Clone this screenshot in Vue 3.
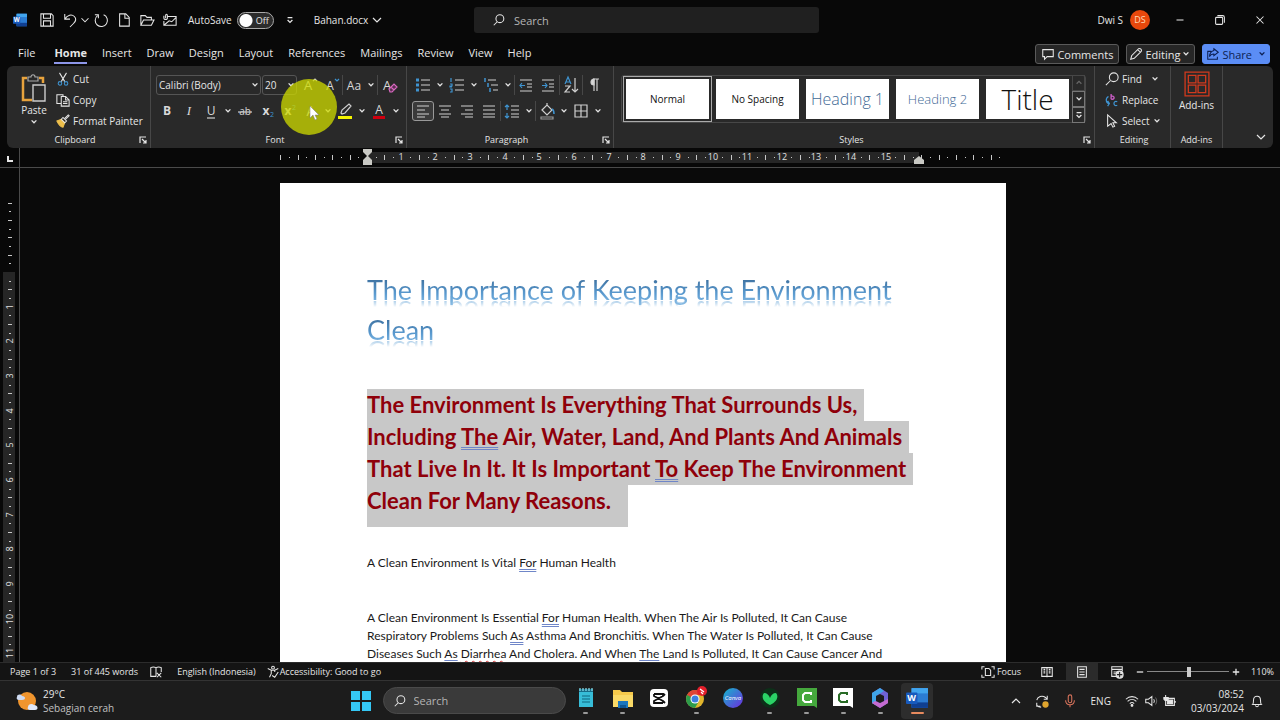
<template>
    <div class="word">
        <header class="titlebar">
            <div class="quick">
                <svg class="logo" viewBox="0 0 16 16" v-html="icons.word"></svg>
                <button v-for="q in quickButtons" :key="q.label" :class="['plain', q.size]" :aria-label="q.label">
                    <svg class="ico" viewBox="0 0 16 16" v-html="icons[q.icon]"></svg>
                </button>
                <label class="autosave">
                    AutoSave
                    <span class="toggle">
                        <input type="checkbox">
                        <span>Off</span>
                    </span>
                </label>
                <button class="plain more" aria-label="Customize">
                    <svg class="tiny" viewBox="0 0 10 10"><path d="M2 2h6M2 5l3 3 3-3" /></svg>
                </button>
                <button class="plain docname">
                    Bahan.docx
                    <svg class="chev" viewBox="0 0 10 10"><path d="M1 3l4 4 4-4" /></svg>
                </button>
            </div>
            <label class="search">
                <svg class="ico" viewBox="0 0 16 16" v-html="icons.search"></svg>
                <input type="text" placeholder="Search" aria-label="Search">
            </label>
            <div class="account">
                <span>Dwi S</span>
                <span class="avatar">DS</span>
                <button class="plain" aria-label="Minimize"><svg class="ico" viewBox="0 0 16 16"><path d="M4 8h8" /></svg></button>
                <button class="plain" aria-label="Restore"><svg class="ico" viewBox="0 0 16 16" v-html="icons.restore"></svg></button>
                <button class="plain" aria-label="Close"><svg class="ico" viewBox="0 0 16 16"><path d="M4 4l8 8M12 4l-8 8" /></svg></button>
            </div>
        </header>

        <nav class="tabs">
            <a v-for="t in tabs" :key="t" href="#" :class="{ active: t === 'Home' }">{{ t }}</a>
            <div class="tab_actions">
                <button class="action">
                    <svg class="ico" viewBox="0 0 16 16"><path d="M2 3h12v8H7l-3 3v-3H2z" /></svg>
                    Comments
                </button>
                <button class="action editing">
                    <svg class="ico" viewBox="0 0 16 16"><path d="M2 14l1-4 8-8c2-1 4 1 3 3l-8 8zM10 3l3 3" /></svg>
                    Editing
                    <svg class="tiny" viewBox="0 0 10 10"><path d="M2 3l3 3 3-3" /></svg>
                </button>
                <button class="action share">
                    <svg class="ico" viewBox="0 0 16 16"><path d="M6 5H2v9h11v-3M9 2l5 4-5 4V8c-2 0-4 1-5 3 0-4 2-6 5-7z" /></svg>
                    Share
                    <svg class="tiny" viewBox="0 0 10 10"><path d="M2 3l3 3 3-3" /></svg>
                </button>
            </div>
        </nav>

        <section class="ribbon">
            <div class="group clipboard">
                <div class="stacked">
                    <button class="plain paste">
                        <svg viewBox="0 0 26 28" v-html="icons.paste"></svg>
                        Paste
                        <svg class="tiny" viewBox="0 0 10 10"><path d="M2 3l3 3 3-3" /></svg>
                    </button>
                    <div class="lines">
                        <button v-for="c in clipboard" :key="c.label" class="plain line">
                            <svg class="ico" viewBox="0 0 16 16" v-html="icons[c.icon]"></svg>{{ c.label }}
                        </button>
                    </div>
                </div>
                <div class="caption"><span>Clipboard</span><svg class="launch" viewBox="0 0 10 10" v-html="icons.launch"></svg></div>
            </div>

            <div class="group font">
                <div class="row">
                    <span class="combo family">
                        <select aria-label="Font"><option>Calibri (Body)</option></select>
                        <svg class="tiny" viewBox="0 0 10 10"><path d="M2 3l3 3 3-3" /></svg>
                    </span>
                    <span class="combo size">
                        <select aria-label="Font size"><option>20</option></select>
                        <svg class="tiny" viewBox="0 0 10 10"><path d="M2 3l3 3 3-3" /></svg>
                    </span>
                    <template v-for="(t, i) in fontTop" :key="i"><span v-if="t === '|'" class="sep"></span><button v-else :class="['plain', t === 'v' ? 'drop' : 'tool']" :aria-label="t"><svg v-if="t === 'v'" class="tiny" viewBox="0 0 10 10"><path d="M2 3l3 3 3-3" /></svg><svg v-else class="glyph" viewBox="0 0 18 18" v-html="icons[t]"></svg></button></template>
                </div>
                <div class="row">
                    <template v-for="(t, i) in fontBottom" :key="i"><button :class="['plain', t === 'v' ? 'drop' : 'tool']" :aria-label="t"><svg v-if="t === 'v'" class="tiny" viewBox="0 0 10 10"><path d="M2 3l3 3 3-3" /></svg><svg v-else class="glyph" viewBox="0 0 18 18" v-html="icons[t]"></svg></button></template>
                </div>
                <div class="caption"><span>Font</span><svg class="launch" viewBox="0 0 10 10" v-html="icons.launch"></svg></div>
                <div class="pointer">
                    <svg viewBox="0 0 12 16"><path d="M2 1v12l3-3 2 5 2-1-2-4h4z" fill="#fff" stroke="#777" stroke-width=".5" /></svg>
                </div>
            </div>

            <div class="group paragraph">
                <div v-for="(line, n) in paragraphTools" :key="n" class="row">
                    <template v-for="(t, i) in line" :key="i"><span v-if="t === '|'" class="sep"></span><button v-else :class="['plain', t === 'v' ? 'drop' : 'tool', { pressed: t === 'left' }]" :aria-label="t"><svg v-if="t === 'v'" class="tiny" viewBox="0 0 10 10"><path d="M2 3l3 3 3-3" /></svg><svg v-else class="glyph" viewBox="0 0 18 18" v-html="icons[t]"></svg></button></template>
                </div>
                <div class="caption"><span>Paragraph</span><svg class="launch" viewBox="0 0 10 10" v-html="icons.launch"></svg></div>
            </div>

            <div class="group styles">
                <div class="gallery">
                    <button v-for="s in styleCards" :key="s.name" :class="['card', s.cls]">{{ s.name }}</button>
                    <div class="scroller">
                        <button aria-label="Up" class="dim"><svg class="tiny" viewBox="0 0 10 10"><path d="M2 6l3-3 3 3" /></svg></button>
                        <button aria-label="Down"><svg class="tiny" viewBox="0 0 10 10"><path d="M2 3l3 3 3-3" /></svg></button>
                        <button aria-label="More styles"><svg class="tiny" viewBox="0 0 10 10"><path d="M2 2h6M2 5l3 3 3-3" /></svg></button>
                    </div>
                </div>
                <div class="caption"><span>Styles</span><svg class="launch" viewBox="0 0 10 10" v-html="icons.launch"></svg></div>
            </div>

            <div class="group find">
                <div class="lines">
                    <button v-for="e in editing" :key="e.label" class="plain line">
                        <svg class="ico" viewBox="0 0 16 16" v-html="icons[e.icon]"></svg>{{ e.label }}
                        <svg v-if="e.drop" :class="['tiny', e.icon + '_drop']" viewBox="0 0 10 10"><path d="M2 3l3 3 3-3" /></svg>
                    </button>
                </div>
                <div class="caption"><span>Editing</span></div>
            </div>

            <div class="group addins">
                <button class="plain addin">
                    <svg viewBox="0 0 24 24"><path d="M1 1h22v22H1zM4 4h7v7H4zM13 4h7v7h-7zM4 13h7v7H4zM13 13h7v7h-7z" /></svg>
                    Add-ins
                </button>
                <div class="caption"><span>Add-ins</span></div>
            </div>

            <button class="plain collapse" aria-label="Collapse ribbon">
                <svg class="chev" viewBox="0 0 10 10"><path d="M1 3l4 4 4-4" /></svg>
            </button>
        </section>

        <div class="hruler">
            <div class="corner"><svg viewBox="0 0 6 6"><path d="M1 0v5h5" /></svg></div>
            <svg class="hscale" viewBox="0 0 726 19">
                <rect x="87" y="4" width="552" height="11" fill="#262626" />
                <rect v-for="m in hMarks" :key="m.pos" :x="m.pos" :y="m.long ? 7 : 9" width="1" :height="m.long ? 5 : 1" fill="#c8c8c8" />
                <text v-for="n in 15" :key="n" :x="Math.round(86 + n * CM)" y="12" text-anchor="middle">{{ n }}</text>
                <path d="M83 1h9v3l-4 4 4 4v5h-9v-5l4-4-4-4z" fill="#c9c9c4" />
                <path d="M634 16v-4l5-4 5 4v4z" fill="#c9c9c4" />
            </svg>
        </div>

        <main class="workspace">
            <div class="vruler">
                <svg viewBox="0 0 20 494">
                    <rect x="3" y="104" width="12" height="390" fill="#262626" />
                    <rect v-for="m in vMarks" :key="m.pos" :x="m.long ? 8 : 9" :y="m.pos" :width="m.long ? 4 : 2" height="1" fill="#c8c8c8" />
                    <text v-for="n in 11" :key="n" text-anchor="middle" :transform="`translate(13 ${Math.round(104 + n * CM)}) rotate(-90)`">{{ n }}</text>
                </svg>
            </div>
            <div class="canvas">
                <article class="page">
                    <h1><span>The Importance of Keeping the Environment</span><span>Clean</span></h1>
                    <p class="selected">
                        <span>The Environment Is Everything That Surrounds Us,</span>
                        <span>Including <u>The</u> Air, Water, Land, And Plants And Animals</span>
                        <span>That Live In It. It Is Important <u>To</u> Keep The Environment</span>
                        <span>Clean For Many Reasons.</span>
                    </p>
                    <p class="body lead">A Clean Environment Is Vital <u>For</u> Human Health</p>
                    <p class="body">
                        A Clean Environment Is Essential <u>For</u> Human Health. When The Air Is Polluted, It Can Cause<br>
                        Respiratory Problems Such <u>As</u> Asthma And Bronchitis. When The Water Is Polluted, It Can Cause<br>
                        Diseases Such <u>As</u> <u class="typo">Diarrhea</u> And Cholera. And When <u>The</u> Land Is Polluted, It Can Cause Cancer And
                    </p>
                </article>
            </div>
        </main>

        <footer class="status">
            <span class="pages">Page 1 of 3</span>
            <span class="count">31 of 445 words</span>
            <svg class="ico proof" viewBox="0 0 16 16"><path d="M8 3v10M8 3C6 2 4 2 2 3v10h6M8 3c2-1 4-1 6 0v5M9 9l5 5M14 9l-5 5" /></svg>
            <span class="lang">English (Indonesia)</span>
            <svg class="ico" viewBox="0 0 16 16"><path d="M2 4l4 2h4l4-2M6 6v4l-2 4M10 6v2M7 12l3 2 4-6" /><circle cx="8" cy="3" r="1.6" /></svg>
            <span>Accessibility: Good to go</span>
            <div class="views">
                <button class="plain focus">
                    <svg class="ico" viewBox="0 0 16 16"><path d="M4 2H1v3M1 11v3h3M12 2h3v3M15 11v3h-3M5 4h4l2 2v6H5z" /></svg>
                    Focus
                </button>
                <button class="plain view" aria-label="Read mode"><svg class="ico" viewBox="0 0 16 16"><path d="M8 3v11M2 3h12v10H2zM4 5h2M4 7h2M4 9h2M10 5h2M10 7h2M10 9h2" /></svg></button>
                <button class="plain view on" aria-label="Print layout"><svg class="ico" viewBox="0 0 16 16"><path d="M3 2h10v12H3zM5 5h6M5 8h6M5 11h6" /></svg></button>
                <button class="plain view" aria-label="Web layout"><svg class="ico" viewBox="0 0 16 16"><path d="M14 7V2H2v11h5M2 5h12M4 8h4M4 10h3" /><circle cx="11" cy="11" r="4" fill="#ddd" /><path d="M11 8v6M8 11h6" stroke="#222" /></svg></button>
                <svg class="tiny" viewBox="0 0 10 10"><path d="M1 5h8" /></svg>
                <input type="range" min="10" max="200" value="106" aria-label="Zoom">
                <svg class="tiny" viewBox="0 0 10 10"><path d="M1 5h8M5 1v8" /></svg>
                <span class="percent">110%</span>
            </div>
        </footer>

        <div class="taskbar">
            <div class="weather">
                <svg viewBox="0 0 22 22" v-html="icons.weather"></svg>
                <div>29°C<br><span>Sebagian cerah</span></div>
            </div>
            <div class="middle">
                <button class="plain start" aria-label="Start"><svg viewBox="0 0 20 20"><path fill="#35c8f5" d="M0 0h9v9H0zM11 0h9v9h-9zM0 11h9v9H0zM11 11h9v9h-9z" /></svg></button>
                <label class="task_search">
                    <svg class="ico" viewBox="0 0 16 16" v-html="icons.search"></svg>
                    <input type="text" placeholder="Search" aria-label="Search Windows">
                </label>
                <div class="apps">
                    <button v-for="a in apps" :key="a.icon" :class="['plain', 'app', { open: a.open, current: a.current }]" :aria-label="a.icon">
                        <svg viewBox="0 0 22 22" v-html="icons[a.icon]"></svg>
                    </button>
                </div>
            </div>
            <div class="tray">
                <svg class="chev" viewBox="0 0 10 10"><path d="M1 7l4-4 4 4" /></svg>
                <svg class="ico" viewBox="0 0 16 16"><path d="M2 7c1-4 6-6 10-3l2 2M14 2v4h-4M2 10v4h4M2 13c1 1 3 2 5 2" /><circle cx="12" cy="12" r="3.6" fill="#e0a52e" stroke="none" /></svg>
                <svg class="ico mic" viewBox="0 0 16 16"><rect x="6" y="1" width="4" height="9" rx="2" /><path d="M3 7c0 7 10 7 10 0M8 12v3" /></svg>
                <span class="eng">ENG</span>
                <div class="signals">
                    <svg class="ico" viewBox="0 0 16 16"><path d="M1 6c4-4 10-4 14 0M3 8.500c3-3 7-3 10 0M5.500 11c1.500-1.500 3.500-1.500 5 0" /><circle cx="8" cy="13" r="1" fill="currentColor" /></svg>
                    <svg class="ico" viewBox="0 0 16 16"><path d="M2 6h3l4-3v10l-4-3H2zM11 6c1 1 1 3 0 4" /><path d="M13 4c2 2 2 6 0 8" stroke="#666" /></svg>
                    <svg class="ico" viewBox="0 0 16 16"><path d="M3 5h10v8H3zM14 8v2" /><path d="M5 7h6v4H5z" fill="currentColor" /><path d="M3 1v3M1 4h5v2c0 2-4 2-5 0z" fill="currentColor" /></svg>
                </div>
                <div class="clock">08:52<br>03/03/2024</div>
                <svg class="ico" viewBox="0 0 16 16"><path d="M3 12c1-1 1-3 1-5 0-6 8-6 8 0 0 2 0 4 1 5zM6 13c1 2 3 2 4 0" /></svg>
            </div>
        </div>
    </div>
</template>

<script setup>
    // 한 칸(1cm)의 눈금 간격
    const CM = 34.65

    const tabs = ['File', 'Home', 'Insert', 'Draw', 'Design', 'Layout', 'References', 'Mailings', 'Review', 'View', 'Help']

    const quickButtons = [
        { label: 'Save', icon: 'save', size: 'q' },
        { label: 'Undo', icon: 'undo', size: 'q' },
        { label: 'Undo list', icon: 'down', size: 'slim' },
        { label: 'Redo', icon: 'redo', size: 'q' },
        { label: 'New', icon: 'file', size: 'q' },
        { label: 'Open', icon: 'folder', size: 'q' },
        { label: 'Email', icon: 'mail', size: 'q' }
    ]

    const clipboard = [
        { label: 'Cut', icon: 'cut' },
        { label: 'Copy', icon: 'copy' },
        { label: 'Format Painter', icon: 'brush' }
    ]

    const fontTop = ['grow', 'shrink', '|', 'aa', 'v', '|', 'clear']
    const fontBottom = ['bold', 'italic', 'underline', 'v', 'strike', 'sub', 'sup', 'effects', 'v', 'highlight', 'v', 'color', 'v']
    const paragraphTools = [
        ['bullets', 'v', 'numbers', 'v', 'levels', 'v', '|', 'outdent', 'indent', '|', 'sort', '|', 'pilcrow'],
        ['left', 'center', 'right', 'justify', '|', 'spacing', 'v', '|', 'bucket', 'v', 'borders', 'v']
    ]

    const styleCards = [
        { name: 'Normal', cls: 'chosen' },
        { name: 'No Spacing', cls: '' },
        { name: 'Heading 1', cls: 'heading1' },
        { name: 'Heading 2', cls: 'heading2' },
        { name: 'Title', cls: 'title' }
    ]

    const editing = [
        { label: 'Find', icon: 'find', drop: true },
        { label: 'Replace', icon: 'replace' },
        { label: 'Select', icon: 'select', drop: true }
    ]

    const apps = [
        { icon: 'notepad', open: true },
        { icon: 'explorer', open: true },
        { icon: 'capcut' },
        { icon: 'chrome', open: true },
        { icon: 'canva' },
        { icon: 'leaf', open: true },
        { icon: 'camtasia', open: true },
        { icon: 'recorder', open: true },
        { icon: 'office', open: true },
        { icon: 'wordapp', open: true, current: true }
    ]

    // 눈금자: 4등분, 반 칸은 긴 눈금, 숫자 자리는 비워 둔다
    const makeMarks = (origin, from, to, last) => {
        const marks = []
        for (let q = from; q <= to; q++) {
            const numbered = q > 0 && q % 4 === 0 && q / 4 <= last
            if (q === 0 || numbered) continue
            marks.push({ pos: Math.round(origin + q * CM / 4), long: q % 2 === 0 })
        }
        return marks
    }
    const hMarks = makeMarks(87, -10, 73, 15)
    const vMarks = makeMarks(104, -8, 45, 11)

    const rows = (list) => `<path d="${list.map(([x, y, w]) => `M${x} ${y}h${w}`).join('')}"/>`
    const letter = (ch, x = 9, y = 14, size = 14, extra = '') => `<text x="${x}" y="${y}" font-size="${size}" text-anchor="middle" fill="#d8d8d8" stroke="none" ${extra}>${ch}</text>`
    const wordMark = (s) => `<g stroke="none"><rect x="${s * .25}" y="${s * .05}" width="${s * .75}" height="${s * .9}" rx="1" fill="#2b7cd3"/><rect x="${s * .25}" y="${s * .05}" width="${s * .75}" height="${s * .24}" fill="#41a5ee"/><rect x="${s * .25}" y="${s * .7}" width="${s * .75}" height="${s * .25}" fill="#103f91"/><rect y="${s * .25}" width="${s * .52}" height="${s * .52}" rx="1" fill="#185abd"/><text x="${s * .26}" y="${s * .65}" font-size="${Math.round(s * .42)}" font-weight="700" text-anchor="middle" fill="#fff">W</text></g>`

    const icons = {
        word: wordMark(16),
        wordapp: wordMark(22),
        save: '<path d="M1 1h12l2 2v12H1zM4 1v5h8V1M4 15v-6h8v6"/>',
        undo: '<path d="M2 1v6h6M2 7c3-5 8-6 11-3s1 6-1 8l-4 4"/>',
        redo: '<path d="M11 2a7 7 0 1 1-7 1M1 2h4v4"/>',
        down: '<path d="M4 6l4 4 4-4"/>',
        file: '<path d="M3 1h7l4 4v10H3zM9 1v5h5"/>',
        folder: '<path d="M1 14V3h5l2 2h5v3M1 14l3-6h12l-3 6z"/>',
        mail: '<path d="M5 4h10v10H1V9M1 14l6-5 3 1 5-5M1 3v3c0 2 4 2 4 0V3c0-2-2-2-2 0v3"/>',
        search: '<circle cx="9" cy="6.500" r="4.500"/><path d="M6 10l-4 4"/>',
        restore: '<rect x="3" y="5" width="8" height="8" rx="1"/><path d="M5 3h6c1 0 2 1 2 2v6"/>',
        paste: '<path d="M6 4H2v22h9M18 4h4v5" stroke="#e8a33d" stroke-width="2.500"/><path d="M7 7V3h3c0-3 4-3 4 0h3v4z" stroke="#aaa"/><path d="M12 11h12v16H12z" stroke="#ccc" stroke-width="1.400"/>',
        cut: '<path d="M4 1l6 10M12 1L6 11"/><g stroke="#3f94d1"><circle cx="4.500" cy="13" r="2"/><circle cx="11.500" cy="13" r="2"/></g>',
        copy: '<path d="M6 12H1V2h7v2M6 4h5l4 4v7H6zM11 4v4h4M8 10h5M8 12h5"/>',
        brush: '<path d="M1 8l5-2 4 4-2 5c-2 0-5-3-7-7z" fill="#edbf4c" stroke="#edbf4c"/><path d="M6 6l2-2 4 4-2 2zM10 5l4-4 1 1-4 4"/>',
        launch: '<path d="M2 8V2h6M4 4l4 4M8 5v3H5"/>',
        grow: letter('A', 8, 14, 13) + '<path d="M13 5l2-2 2 2"/>',
        shrink: letter('A', 8, 14, 12) + '<path d="M13 3l2 2 2-2" stroke="#3f94d1"/>',
        aa: letter('Aa', 9, 14, 12),
        clear: letter('A', 7, 14, 13) + '<path d="M9 13l5-5 3 3-5 5h-2zM11 11l3 3" stroke="#d968c0" fill="#5a2f52"/>',
        bold: letter('B', 9, 13, 12, 'font-weight="700"'),
        italic: letter('I', 9, 13, 13, 'font-style="italic" font-family="Liberation Serif"'),
        underline: letter('U', 9, 13, 12) + '<path d="M5 16h8"/>',
        strike: letter('ab', 9, 13, 10) + '<path d="M2 10h14"/>',
        sub: letter('x', 8, 13, 12, 'font-weight="700"') + '<text x="14" y="15" font-size="7" text-anchor="middle" fill="#3f94d1" stroke="none">2</text>',
        sup: letter('x', 8, 13, 12, 'font-weight="700"') + '<text x="14" y="8" font-size="7" text-anchor="middle" fill="#3f94d1" stroke="none">2</text>',
        effects: letter('A', 9, 14, 14),
        highlight: '<path d="M5 11l1-3 7-6 2 2-6 7-3 1z"/><path d="M2 15.500h14" stroke="#f4f400" stroke-width="3"/>',
        color: letter('A', 9, 12, 12) + '<path d="M3 15.500h12" stroke="#d00010" stroke-width="3"/>',
        bullets: rows([[7, 4, 9], [7, 9, 9], [7, 14, 9]]) + '<path d="M2 4h3M2 9h3M2 14h3" stroke="#3f94d1" stroke-width="3"/>',
        numbers: rows([[7, 4, 9], [7, 9, 9], [7, 14, 9]]) + '<path d="M3 2v4M2 8h2v2H2v1h2M2 13h2v3H2" stroke="#3f94d1"/>',
        levels: rows([[6, 4, 8], [9, 9, 7], [11, 14, 5]]) + '<path d="M3 2v4M6 7v4M8 12v4" stroke="#3f94d1" stroke-width="1.500"/>',
        outdent: rows([[3, 4, 12], [10, 8, 5], [10, 11, 5], [3, 15, 12]]) + '<path d="M8 9.500H3M5 7L3 9.500 5 12" stroke="#3f94d1"/>',
        indent: rows([[3, 4, 12], [10, 8, 5], [10, 11, 5], [3, 15, 12]]) + '<path d="M3 9.500h5M6 7l2 2.500L6 12" stroke="#3f94d1"/>',
        // 정렬 아이콘의 A/Z는 선으로 그린다
        sort: '<path d="M3 8l3-7 3 7M4 6h4" stroke="#3f94d1"/><path d="M3 10h5l-5 6h5M13 2v14M10 13l3 3 3-3"/>',
        pilcrow: '<path d="M9 3v12M12 3v12M14 3H8" /><path d="M9 3a3 3 0 0 0 0 6z" fill="#d8d8d8"/>',
        left: rows([[3, 4, 12], [3, 8, 8], [3, 12, 12], [3, 15, 8]]),
        center: rows([[3, 4, 12], [5, 8, 8], [3, 12, 12], [5, 15, 8]]),
        right: rows([[3, 4, 12], [7, 8, 8], [3, 12, 12], [7, 15, 8]]),
        justify: rows([[3, 4, 12], [3, 8, 12], [3, 12, 12], [3, 15, 12]]),
        spacing: rows([[8, 4, 8], [8, 8, 8], [8, 12, 8], [8, 15, 8]]) + '<path d="M4 3v5M2 5l2-2 2 2M4 11v5M2 14l2 2 2-2" stroke="#3f94d1"/>',
        bucket: '<path d="M4 8l5-5 5 5-5 5zM9 3V1"/><path d="M14 7c2 1 2 3 2 5" stroke="#3f94d1" stroke-width="1.500"/><path d="M3 15h12v2H3z" stroke="#999"/>',
        borders: '<path d="M3 3h12v12H3zM9 3v12M3 9h12"/>',
        find: '<circle cx="10" cy="6" r="5"/><path d="M6 10l-5 5"/>',
        replace: '<path d="M7 1v6M7 4c4-2 5 4 0 3" stroke="#c45bc0" stroke-width="1.600"/><path d="M4 4c-4 2-3 8 1 8M3 9l2 3-2 3M14 10c-5-2-5 6 0 4" stroke="#3f94d1" stroke-width="1.400"/>',
        select: '<path d="M3 1v13l4-3 2 4 2-1-2-4h4z"/>',
        weather: '<circle cx="11" cy="11" r="9" fill="#f0952e"/><path d="M1 7c0-3 4-3 5-1 4 0 4 4 0 4H3C1 10 0 8 1 7z" fill="#cfdcf3"/><path d="M12 17c0-3 4-4 6-2 4 0 5 5 1 5h-5c-2 0-3-2-2-3z" fill="#dfe8fa"/>',
        notepad: '<path d="M4 2h14v18H4z" fill="#37bdd8"/><path d="M4 2h14v3H4z" fill="#176c88"/><path d="M5 1v3M8 1v3M11 1v3M14 1v3M17 1v3" stroke="#8be3f0"/><path d="M7 9h8M7 12h8M7 15h8" stroke="#0f667f"/>',
        explorer: '<path d="M1 3h7l2 2h11v15H1z" fill="#f5c94b"/><path d="M1 8h20v12H1z" fill="#f9d967"/><path d="M6 14h10v7H6z" fill="#1b76bd"/><path d="M8 18h6v3H8z" fill="#0f5692"/>',
        capcut: '<rect x="2" y="2" width="18" height="18" rx="4" fill="#fff"/><path d="M6 7h9v2l-9 5v2h9M6 7v2l9 5v2M15 9l2-2M15 14l2 2" stroke="#111" stroke-width="1.800"/>',
        chrome: '<circle cx="10" cy="12" r="9" fill="#e2b52c"/><path d="M2 8a9 9 0 0 1 16 0h-8v8z" fill="#df4636"/><path d="M2 8a9 9 0 0 0 8 13l4-7-4-2z" fill="#2d9c4b"/><circle cx="10" cy="12" r="4.500" fill="#fff"/><circle cx="10" cy="12" r="3.500" fill="#3d7fe0"/><circle cx="17" cy="4" r="5" fill="#e3202c"/><path d="M15 2l4 3M16 5l2 2" stroke="#fff"/>',
        canva: '<defs><linearGradient id="cv" x1="0" y1="0" x2="1" y2="1"><stop offset="0" stop-color="#12b9cb"/><stop offset="1" stop-color="#6f2be0"/></linearGradient></defs><circle cx="11" cy="11" r="10" fill="url(#cv)"/><text x="11" y="13" font-size="6" font-style="italic" text-anchor="middle" fill="#fff">Canva</text>',
        leaf: '<circle cx="11" cy="11" r="10" fill="#0c3018"/><path d="M11 18C2 14 3 8 5 6c3 0 5 2 6 5 1-3 3-5 6-5 2 2 3 8-6 12z" fill="#2bd366"/>',
        camtasia: '<path d="M1 1h20v20l-3-2H1z" fill="#45a83d"/><path d="M15 8V6H9L7 8v5l2 2h6v-2" stroke="#fff" stroke-width="2"/>',
        recorder: '<path d="M1 1h20v20l-3-2H1z" fill="#fff"/><path d="M15 8V6H9L7 8v5l2 2h6v-2" stroke="#286b25" stroke-width="2"/>',
        office: '<path d="M11 1l8 5v10l-8 5-8-5V6z" fill="#6f63d6"/><path d="M11 1L3 6v10l4 2V9l8-5z" fill="#3fa5e8"/><path d="M3 16l8 5 8-5v-4l-8 4-5-2z" fill="#c66bd0"/><path d="M11 7l4 2v5l-4 2-4-2V9z" fill="#1d1d1d"/>'
    }
</script>

<style>
    body {
        background: #080808;
    }
</style>

<style scoped>
    * {
        box-sizing: border-box;
    }

    .word {
        height: 100vh;
        display: flex;
        flex-direction: column;
        overflow: hidden;
        background: #080808;
        color: #e6e6e6;
        font-family: 'Open Sans', 'Noto Sans', sans-serif;
        font-size: 10px;
    }

    button,
    input,
    select {
        font: inherit;
        color: inherit;
        margin: 0;
        padding: 0;
    }

    svg {
        fill: none;
        stroke: currentColor;
        stroke-width: 1.2;
        flex: none;
        overflow: visible;
    }

    .plain {
        display: flex;
        align-items: center;
        justify-content: center;
        background: none;
        border: 0;
        white-space: nowrap;
    }

    .ico {
        width: 14px;
        height: 14px;
    }

    .chev {
        width: 10px;
        height: 10px;
    }

    .tiny {
        width: 8px;
        height: 8px;
        stroke-width: 1.6;
    }

    /* 제목 표시줄 */
    .titlebar {
        flex: none;
        height: 40px;
        padding-left: 13px;
        display: grid;
        grid-template-columns: 1fr 345px 1fr;
        align-items: center;
    }

    .quick {
        display: flex;
        align-items: center;
    }

    .logo {
        width: 14px;
        height: 14px;
        margin-right: 8px;
    }

    .q {
        width: 23px;
    }

    .slim {
        width: 8px;
    }

    .autosave {
        display: flex;
        align-items: center;
        gap: 5px;
        margin-left: 7px;
    }

    .toggle {
        display: grid;
        align-items: center;
    }

    .toggle > * {
        grid-area: 1 / 1;
    }

    .toggle input {
        appearance: none;
        width: 37px;
        height: 17px;
        border: 1px solid #aaa;
        border-radius: 9px;
        background: radial-gradient(circle at 8px 50%, #fff 6px, #2c2c2c 7px);
    }

    .toggle span {
        font-size: 9px;
        padding-left: 19px;
    }

    .more {
        width: 32px;
    }

    .docname {
        gap: 4px;
        margin-left: 8px;
    }

    .search {
        height: 26px;
        display: flex;
        align-items: center;
        gap: 8px;
        padding-left: 18px;
        background: #202020;
        border-radius: 3px;
    }

    .search input,
    .task_search input {
        width: 100%;
        min-width: 0;
        border: 0;
        background: none;
        font-size: 11px;
    }

    input::placeholder {
        color: #b4b4b4;
        opacity: 1;
    }

    .account {
        display: flex;
        align-items: center;
        justify-content: flex-end;
    }

    .account .plain {
        width: 40px;
    }

    .avatar {
        width: 20px;
        height: 20px;
        margin: 0 10px 0 7px;
        border-radius: 50%;
        background: #e8480c;
        color: #ffd9b5;
        font-size: 9px;
        line-height: 20px;
        text-align: center;
    }

    /* 탭 */
    .tabs {
        flex: none;
        height: 26px;
        padding: 2px 10px 0 18px;
        display: flex;
        align-items: center;
        gap: 15px;
        font-size: 11px;
    }

    .tabs a {
        color: inherit;
        text-decoration: none;
        line-height: 18px;
        border-bottom: 2px solid transparent;
    }

    .tabs .active {
        margin-left: 4px;
        font-weight: 700;
        border-color: #8d96e8;
    }

    .tab_actions {
        margin-left: auto;
        display: flex;
        gap: 7px;
    }

    .action {
        height: 20px;
        padding: 0 5px;
        display: flex;
        align-items: center;
        gap: 2px;
        background: #262626;
        border: 1px solid #5a5a5a;
        border-radius: 3px;
    }

    .editing {
        padding: 0 4px 0 2px;
    }

    .share {
        background: #5b8df5;
        border-color: #5b8df5;
        color: #0c1f52;
        padding: 0 3px;
    }

    .share .tiny {
        margin-left: 4px;
    }

    /* 리본 */
    .ribbon {
        flex: none;
        min-height: 82px;
        margin: 0 7px;
        display: flex;
        background: #292929;
        border-radius: 6px;
    }

    .group {
        display: flex;
        flex-direction: column;
        gap: 6px;
        padding: 9px 2px 0 5px;
        border-right: 1px solid #474747;
    }

    .clipboard {
        width: 144px;
        padding-top: 2px;
        gap: 0;
    }

    .font {
        width: 256px;
        position: relative;
    }

    .paragraph {
        width: 207px;
    }

    .styles {
        flex: 1;
        padding-left: 7px;
    }

    .find {
        width: 76px;
        padding-top: 2px;
        gap: 0;
    }

    .addins {
        width: 52px;
        padding: 5px 0 0;
        gap: 0;
    }

    .caption {
        margin-top: auto;
        display: flex;
        align-items: center;
        font-size: 9px;
        line-height: 16px;
    }

    .caption span {
        flex: 1;
        text-align: center;
    }

    .launch {
        width: 10px;
        height: 10px;
    }

    .row {
        height: 20px;
        display: flex;
        align-items: center;
    }

    .tool {
        width: 22px;
        height: 20px;
    }

    .drop {
        width: 12px;
        height: 20px;
    }

    .glyph {
        width: 18px;
        height: 18px;
        stroke: #d0d0d0;
    }

    .sep {
        width: 1px;
        height: 20px;
        background: #474747;
    }

    .pressed {
        border: 1px solid #999;
        border-radius: 3px;
        background: #3a3a3a;
    }

    .stacked {
        display: flex;
    }

    .paste {
        width: 44px;
        flex: none;
        flex-direction: column;
        gap: 1px;
    }

    .paste > svg:first-child {
        width: 26px;
        height: 28px;
    }

    .lines {
        display: flex;
        flex-direction: column;
    }

    .line {
        height: 21px;
        justify-content: flex-start;
        gap: 3px;
    }

    .find .line {
        padding-left: 5px;
    }

    .find_drop {
        margin-left: 6px;
    }

    .combo {
        display: grid;
        align-items: center;
        margin-right: 1px;
    }

    .combo > * {
        grid-area: 1 / 1;
    }

    .combo svg {
        justify-self: end;
        margin-right: 2px;
    }

    .combo select {
        appearance: none;
        width: 100%;
        height: 20px;
        padding-left: 2px;
        background: none;
        border: 1px solid #555;
        border-radius: 3px;
        white-space: nowrap;
    }

    .family {
        width: 105px;
    }

    .size {
        width: 35px;
    }

    .pointer {
        position: absolute;
        left: 130px;
        top: 13px;
        width: 56px;
        height: 56px;
        border-radius: 50%;
        background: rgba(206, 218, 0, .76);
    }

    .pointer svg {
        position: absolute;
        left: 27px;
        top: 26px;
        width: 12px;
        height: 16px;
    }

    .gallery {
        display: flex;
        gap: 7px;
        align-self: flex-start;
        height: 48px;
        padding: 3px 0 3px 4px;
        border: 1px solid #474747;
        border-radius: 3px;
    }

    .card {
        width: 83px;
        height: 40px;
        border: 0;
        background: #fff;
        color: #111;
        white-space: nowrap;
    }

    .chosen {
        outline: 1px solid #aaa;
        outline-offset: 2px;
    }

    .heading1 {
        color: #3f6a96;
        font-size: 16px;
        font-weight: 300;
    }

    .heading2 {
        color: #3f6a96;
        font-size: 13px;
        font-weight: 300;
    }

    .title {
        font-size: 28px;
        line-height: 36px;
        font-weight: 300;
    }

    .scroller {
        display: flex;
        flex-direction: column;
        width: 13px;
        margin: -4px 0 -4px -4px;
    }

    .scroller button {
        flex: 1;
        display: flex;
        align-items: center;
        justify-content: center;
        background: none;
        border: 1px solid #777;
    }

    .scroller .dim {
        color: #666;
        border-color: #474747;
    }

    .addin {
        flex-direction: column;
        gap: 1px;
    }

    .addin svg {
        width: 26px;
        height: 26px;
        stroke: #d23a1e;
    }

    .collapse {
        width: 50px;
        align-items: flex-end;
        padding: 0 0 6px 26px;
    }

    /* 눈금자 */
    .hruler {
        flex: none;
        height: 20px;
        display: flex;
        align-items: flex-start;
        padding-right: 14px;
        border-bottom: 1px solid #4a4a4a;
    }

    .corner {
        width: 20px;
        height: 20px;
        padding: 8px 0 0 7px;
        border-right: 1px solid #4a4a4a;
        line-height: 0;
    }

    .corner svg {
        width: 6px;
        height: 6px;
        stroke-width: 2;
    }

    .hscale {
        width: 726px;
        height: 19px;
        margin: 0 auto;
    }

    .hscale text,
    .vruler text {
        fill: #e0e0e0;
        stroke: none;
        font-size: 9px;
    }

    .hscale rect,
    .hscale path,
    .vruler rect {
        stroke-width: 0;
    }

    .workspace {
        flex: 1;
        min-height: 0;
        display: flex;
    }

    .vruler {
        width: 20px;
        border-right: 1px solid #4a4a4a;
        overflow: hidden;
    }

    .vruler svg {
        width: 20px;
        height: 494px;
    }

    .canvas {
        flex: 1;
        overflow: hidden;
        padding: 15px 14px 0 0;
        background: #0a0a0a;
    }

    /* 문서 */
    .page {
        width: 726px;
        min-height: 100%;
        margin: 0 auto;
        padding: 87px 20px 0 87px;
        background: #fff;
        color: #1a1a1a;
        font-family: Lato, 'Open Sans', sans-serif;
        white-space: nowrap;
    }

    h1,
    p {
        margin: 0;
    }

    h1 {
        font-size: 27px;
        font-weight: 400;
        line-height: 40px;
    }

    h1 span {
        display: block;
        width: fit-content;
        color: transparent;
        background: linear-gradient(#3c6f9e 20%, #5b9bd0 60%, #8fc0e6 90%);
        background-clip: text;
        -webkit-box-reflect: below -19px linear-gradient(transparent 60%, rgba(0, 0, 0, .6) 76%);
    }

    .selected {
        margin-top: 39px;
        color: #8f000a;
        font-size: 22px;
        font-weight: 700;
        line-height: 32px;
    }

    .selected span {
        display: block;
        width: fit-content;
        padding-right: 7px;
        background: #c8c8c8;
    }

    .selected span:last-child {
        padding: 0 17px 10px 0;
    }

    u {
        text-decoration: underline double #6f86c8 1px;
        text-underline-offset: 2px;
    }

    .typo {
        text-decoration: underline wavy #d43c3c 1px;
    }

    .body {
        margin-top: 37px;
        font-size: 12px;
        line-height: 18px;
    }

    .lead {
        margin-top: 27px;
    }

    /* 상태 표시줄 */
    .status {
        flex: none;
        height: 18px;
        padding: 0 6px 0 10px;
        display: flex;
        align-items: center;
        border-top: 1px solid #2c2c2c;
        background: #141414;
        font-size: 9px;
    }

    .count {
        margin: 0 11px 0 15px;
    }

    .lang {
        margin: 0 10px 0 14px;
    }

    .views {
        margin-left: auto;
        display: flex;
        align-items: center;
        gap: 3px;
    }

    .focus {
        gap: 2px;
        margin-right: 7px;
    }

    .view {
        width: 32px;
        height: 17px;
    }

    .on {
        background: #2b2b2b;
    }

    .views input {
        appearance: none;
        width: 82px;
        height: 10px;
        background: linear-gradient(#888, #888) center / 100% 1px no-repeat;
    }

    .views input::-webkit-slider-thumb {
        appearance: none;
        width: 4px;
        height: 10px;
        background: #ccc;
    }

    .percent {
        margin-left: 8px;
    }

    /* 작업 표시줄 */
    .taskbar {
        flex: none;
        height: 40px;
        padding: 0 10px 0 16px;
        display: grid;
        grid-template-columns: 1fr auto 1fr;
        align-items: center;
        border-top: 1px solid #333;
        background: #1c1c1c;
    }

    .weather {
        display: flex;
        align-items: center;
        gap: 5px;
        line-height: 14px;
    }

    .weather svg,
    .app svg {
        width: 22px;
        height: 22px;
        stroke: none;
    }

    .weather span {
        color: #c0c0c0;
    }

    .middle {
        display: flex;
        align-items: center;
    }

    .start {
        width: 20px;
        margin-right: 12px;
    }

    .start svg {
        width: 20px;
        height: 20px;
        stroke: none;
    }

    .task_search {
        width: 183px;
        height: 27px;
        padding-left: 9px;
        display: flex;
        align-items: center;
        gap: 7px;
        border: 1px solid #4a4a4a;
        border-radius: 14px;
        background: #3a3a3a;
    }

    .apps {
        width: 368px;
        margin-left: 2px;
        display: grid;
        grid-template-columns: repeat(10, 1fr);
    }

    .app {
        height: 36px;
        margin: 0 2px;
        flex-direction: column;
        gap: 3px;
        border-radius: 4px;
    }

    .app::after {
        content: '';
        width: 5px;
        height: 2px;
    }

    .open::after {
        background: #999;
        border-radius: 1px;
    }

    .current {
        background: #2d2d2d;
    }

    .current::after {
        width: 13px;
        background: #e88a5e;
    }

    .tray {
        display: flex;
        align-items: center;
        justify-content: flex-end;
        gap: 14px;
        padding-right: 6px;
    }

    .mic {
        color: #d9745c;
    }

    .signals {
        display: flex;
        gap: 5px;
    }

    .clock {
        text-align: right;
        line-height: 14px;
    }

    .clock + svg {
        margin-left: -8px;
    }
</style>
